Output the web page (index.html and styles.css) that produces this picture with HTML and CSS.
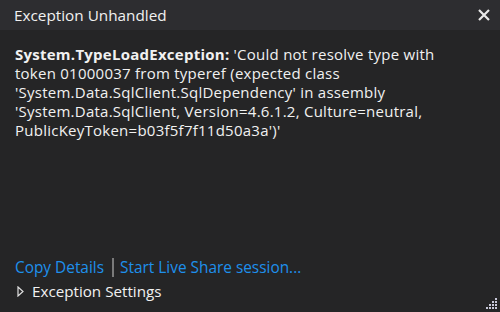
FILE: index.html
```html
<!DOCTYPE html>
<html>
<head>
<meta charset="utf-8">
<link rel="stylesheet" href="styles.css">
</head>
<body>
<div class="dialog">
  <div class="header">
    <span class="title">Exception Unhandled</span>
    <svg class="close" width="12" height="12" viewBox="0 0 12 12"><path d="M1 1 L11 11 M11 1 L1 11" stroke="#e8e8e8" stroke-width="2.2" fill="none"/></svg>
  </div>
  <div class="body">
    <p class="message"><b>System.TypeLoadException:</b> 'Could not resolve type with<br>token 01000037 from typeref (expected class<br>'System.Data.SqlClient.SqlDependency' in assembly<br>'System.Data.SqlClient, Version=4.6.1.2, Culture=neutral,<br>PublicKeyToken=b03f5f7f11d50a3a')'</p>
    <div class="links">
      <span class="link">Copy Details</span>
      <span class="sep"></span>
      <span class="link">Start Live Share session...</span>
    </div>
    <div class="settings">
      <svg class="tri" width="7" height="11" viewBox="0 0 7 11"><path d="M1 1 L6 5.5 L1 10 Z" stroke="#e0e0e0" stroke-width="1.2" fill="none"/></svg>
      <span>Exception Settings</span>
    </div>
  </div>
  <svg class="grip" width="12" height="12" viewBox="0 0 12 12">
    <g fill="#c8c8d8">
      <rect x="9" y="0" width="2" height="2"/>
      <rect x="6" y="3" width="2" height="2"/><rect x="9" y="3" width="2" height="2"/>
      <rect x="3" y="6" width="2" height="2"/><rect x="6" y="6" width="2" height="2"/><rect x="9" y="6" width="2" height="2"/>
      <rect x="0" y="9" width="2" height="2"/><rect x="3" y="9" width="2" height="2"/><rect x="6" y="9" width="2" height="2"/><rect x="9" y="9" width="2" height="2"/>
    </g>
  </svg>
</div>
</body>
</html>
```
FILE: styles.css
```css
html, body {
  margin: 0;
  padding: 0;
  background: #252526;
}
.dialog {
  position: relative;
  width: 500px;
  height: 312px;
  background: #252526;
  font-family: "Open Sans", "Noto Sans", sans-serif;
  color: #f1f1f1;
  display: flex;
  flex-direction: column;
  overflow: hidden;
}
.header {
  height: 30px;
  background: #2d2d30;
  display: flex;
  align-items: center;
  justify-content: space-between;
  padding: 0 10px 0 14px;
  flex-shrink: 0;
}
.title {
  font-size: 15.3px;
  color: #f1f1f1;
}
.close {
  display: block;
  margin-top: -1px;
}
.body {
  flex: 1;
  display: flex;
  flex-direction: column;
  padding: 15px 15px 0 15px;
}
.message {
  margin: 0;
  font-size: 15px;
  letter-spacing: 0.25px;
  line-height: 19px;
  flex: 1;
  white-space: nowrap;
}
.message b {
  font-weight: 700;
}
.links {
  display: flex;
  align-items: center;
  font-size: 15.4px;
  height: 24px;
}
.link {
  color: #1e90ec;
}
.sep {
  width: 2px;
  height: 19px;
  background: #7a7a7a;
  margin: 0 6px 0 8px;
}
.settings {
  display: flex;
  align-items: center;
  font-size: 15.2px;
  height: 24px;
  margin-bottom: 9px;
}
.tri {
  margin: 0 8px 0 2px;
}
.grip {
  position: absolute;
  right: 2px;
  bottom: 2px;
}
```
